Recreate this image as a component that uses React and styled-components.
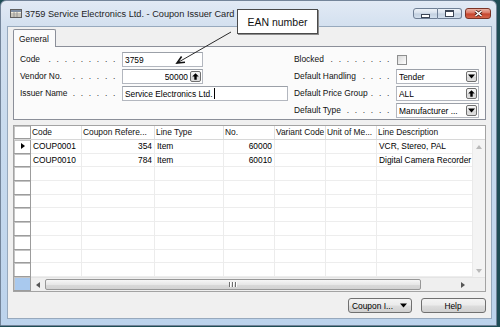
import React from 'react'
import styled, { createGlobalStyle } from 'styled-components'

const GlobalStyle = createGlobalStyle`
  html, body {
    margin: 0;
    padding: 0;
    background: #1f4d56;
  }
  body {
    width: 500px;
    height: 327px;
    overflow: hidden;
    font-family: 'Liberation Sans', Arial, sans-serif;
  }
`;

const Window = styled.div`
  position: relative;
  width: 497px;
  height: 326px;
  box-sizing: border-box;
  border: 1px solid #74859a;
  border-radius: 6px 6px 0 0;
  background: linear-gradient(to bottom, #e2eaf5 0px, #d3e0ef 26px, #c9dbee 120px, #bcd3ec 100%);
  display: flex;
  flex-direction: column;
`;

const TitleBar = styled.div`
  height: 25px;
  flex-shrink: 0;
  display: flex;
  align-items: center;
  padding: 0 5px 0 9px;
  gap: 3px;
`;

const Title = styled.span`
  font-size: 9.2px;
  color: #1e1e1e;
  white-space: nowrap;
`;

const WinButtons = styled.div`
  margin-left: auto;
  display: flex;
  align-items: center;
  gap: 3px;
`;

const WinGroup = styled.div`
  display: flex;
`;

const WinButton = styled.div`
  width: ${p => p.$w}px;
  height: 11px;
  box-sizing: border-box;
  border: 1px solid ${p => (p.$close ? '#7b3326' : '#6f7f95')};
  border-left-width: ${p => (p.$joined ? 0 : 1)}px;
  border-radius: ${p => p.$radius};
  background: ${p => (p.$close
    ? 'linear-gradient(to bottom, #eab1a4 0%, #d9735f 48%, #c6432b 52%, #d5654c 100%)'
    : 'linear-gradient(to bottom, #edf2f8 0%, #d6e0ec 48%, #c2cfdf 52%, #d3e0ee 100%)')};
  display: flex;
  align-items: center;
  justify-content: center;
`;

const MinGlyph = styled.div`
  width: 7px;
  height: 2px;
  margin-top: 4px;
  background: #fff;
  border: 1px solid #3c4656;
`;

const MaxGlyph = styled.div`
  width: 7px;
  height: 4px;
  background: #fff;
  border: 1px solid #3c4656;
  border-top-width: 2px;
`;

const Client = styled.div`
  flex: 1;
  margin: 0 4px 6px 6px;
  border: 1px solid #97a9bd;
  background: #f0f0f0;
  display: flex;
  flex-direction: column;
  padding: 2px 5px 5px 5px;
  min-height: 0;
`;

const TabStrip = styled.div`
  display: flex;
  height: 18px;
  flex-shrink: 0;
`;

const Tab = styled.div`
  width: 43px;
  box-sizing: border-box;
  border: 1px solid #8b8f99;
  border-bottom: none;
  border-radius: 2px 2px 0 0;
  background: #fbfbfb;
  font-size: 8.4px;
  color: #111;
  padding: 4px 0 0 5px;
  position: relative;
  z-index: 1;
`;

const Panel = styled.div`
  height: 74px;
  box-sizing: border-box;
  margin-top: -1px;
  border: 1px solid #8b8f99;
  background: #fbfbfb;
  padding: 5px 6px 1px 6px;
  display: flex;
  flex-shrink: 0;
`;

const FieldColumn = styled.div`
  width: ${p => (p.$w ? `${p.$w}px` : 'auto')};
  flex: ${p => (p.$w ? '0 0 auto' : '1')};
  display: flex;
  flex-direction: column;
  gap: 2px;
`;

const FieldRow = styled.div`
  display: flex;
  align-items: center;
  height: 15px;
`;

const Label = styled.div`
  width: 102px;
  flex-shrink: 0;
  display: flex;
  align-items: baseline;
  white-space: nowrap;
  font-size: 8.4px;
  line-height: 15px;
  color: #111;
`;

const Leader = styled.span`
  margin-left: auto;
  letter-spacing: 1.7px;
  padding-right: 5px;
  color: #333;
`;

const Input = styled.div`
  width: ${p => p.$w}px;
  height: 15px;
  box-sizing: border-box;
  border: 1px solid #b3b7bf;
  border-top-color: #9ba0a8;
  background: #fff;
  display: flex;
  align-items: center;
  justify-content: ${p => (p.$right ? 'flex-end' : 'flex-start')};
  padding: 0 1px 0 2px;
  font-size: 8.4px;
  color: #000;
  white-space: nowrap;
  overflow: hidden;
`;

const InputText = styled.span`
  flex: ${p => (p.$right ? '0 0 auto' : '1')};
  overflow: hidden;
`;

const Caret = styled.span`
  width: 1px;
  height: 11px;
  background: #000;
  margin-left: 1px;
`;

const AssistButton = styled.div`
  width: 11px;
  height: 11px;
  margin-left: 2px;
  box-sizing: border-box;
  flex-shrink: 0;
  border: 1px solid #707070;
  border-radius: 2px;
  background: linear-gradient(to bottom, #f7f7f7 0%, #e6e6e6 50%, #d6d6d6 51%, #e0e0e0 100%);
  display: flex;
  align-items: center;
  justify-content: center;
`;

const CheckBox = styled.div`
  width: 10px;
  height: 10px;
  margin-left: 1px;
  box-sizing: border-box;
  border: 1px solid #8e8f8f;
  background: linear-gradient(135deg, #d8d8d8 0%, #f4f4f4 70%, #fff 100%);
`;

const GridBox = styled.div`
  margin-top: 5px;
  height: 167px;
  box-sizing: border-box;
  border: 1px solid #a3a3a3;
  background: #fff;
  display: flex;
  flex-direction: column;
  flex-shrink: 0;
`;

const HeaderRow = styled.div`
  display: flex;
  height: 14px;
  box-sizing: border-box;
  border-bottom: 1px solid #d8d8d8;
  flex-shrink: 0;
`;

const HeaderCell = styled.div`
  width: ${p => (p.$w ? `${p.$w}px` : 'auto')};
  flex: ${p => (p.$w ? '0 0 auto' : '1')};
  box-sizing: border-box;
  border-right: ${p => (p.$last ? 'none' : '1px solid #e0e0e0')};
  padding-left: 1px;
  font-size: 8.4px;
  line-height: 13px;
  color: #111;
  white-space: nowrap;
  overflow: hidden;
`;

const Selector = styled.div`
  width: 17px;
  flex-shrink: 0;
  box-sizing: border-box;
  border-right: 1px solid #9c9c9c;
  border-bottom: 1px solid #9c9c9c;
  box-shadow: inset 1px 1px 0 #c4c4c4;
  background: ${p => (p.$corner ? '#a9c9ee' : '#fff')};
  display: flex;
  align-items: center;
  justify-content: center;
`;

const RowMarker = styled.span`
  width: 0;
  height: 0;
  margin-left: 2px;
  border-top: 3.5px solid transparent;
  border-bottom: 3.5px solid transparent;
  border-left: 4px solid #000;
`;

const Body = styled.div`
  flex: 1;
  display: flex;
  min-height: 0;
`;

const Rows = styled.div`
  flex: 1;
  display: flex;
  flex-direction: column;
  overflow: hidden;
`;

const Row = styled.div`
  display: flex;
  height: 13.7px;
  flex-shrink: 0;
`;

const Cell = styled.div`
  width: ${p => (p.$w ? `${p.$w}px` : 'auto')};
  flex: ${p => (p.$w ? '0 0 auto' : '1')};
  box-sizing: border-box;
  border-right: ${p => (p.$last ? 'none' : '1px solid #ececec')};
  border-bottom: 1px solid #ededed;
  padding: 0 2px;
  font-size: 8.4px;
  line-height: 13px;
  color: #000;
  text-align: ${p => (p.$right ? 'right' : 'left')};
  white-space: nowrap;
  overflow: hidden;
`;

const VScroll = styled.div`
  width: 13px;
  flex-shrink: 0;
  background: #f4f4f4;
  border-left: 1px solid #eaeaea;
  display: flex;
  flex-direction: column;
  justify-content: space-between;
  align-items: center;
  padding: 5px 0 4px;
  box-sizing: border-box;
`;

const ScrollRow = styled.div`
  display: flex;
  height: 14px;
  flex-shrink: 0;
`;

const HScroll = styled.div`
  flex: 1;
  background: #efefef;
  display: flex;
  align-items: center;
  box-sizing: border-box;
  border-top: 1px solid #e4e4e4;
`;

const ArrowBox = styled.div`
  width: ${p => p.$w}px;
  flex-shrink: 0;
  display: flex;
  justify-content: ${p => (p.$end ? 'flex-end' : 'center')};
  padding-right: ${p => (p.$end ? 6 : 0)}px;
  box-sizing: border-box;
  align-items: center;
`;

const Thumb = styled.div`
  width: 376px;
  height: 11px;
  box-sizing: border-box;
  border: 1px solid #979797;
  border-radius: 2px;
  background: linear-gradient(to bottom, #f6f6f6 0%, #e7e7e7 50%, #d9d9d9 51%, #d2d2d2 100%);
  display: flex;
  align-items: center;
  justify-content: center;
  gap: 1px;
`;

const Grip = styled.span`
  width: 1px;
  height: 5px;
  background: #6e6e6e;
  box-shadow: 1px 0 0 #fff;
  margin-right: 1px;
`;

const CornerBox = styled.div`
  width: 13px;
  flex-shrink: 0;
  background: #efefef;
  border-top: 1px solid #e4e4e4;
`;

const BottomBar = styled.div`
  margin-top: 6px;
  display: flex;
  justify-content: flex-end;
  gap: 9px;
  flex-shrink: 0;
`;

const Button = styled.div`
  width: ${p => p.$w}px;
  height: 15px;
  box-sizing: border-box;
  border: 1px solid #707070;
  border-radius: 3px;
  background: linear-gradient(to bottom, #f3f3f3 0%, #ebebeb 48%, #dddddd 52%, #d0d0d0 100%);
  display: flex;
  align-items: center;
  justify-content: ${p => (p.$split ? 'space-between' : 'center')};
  padding: 0 4px 0 3px;
  font-size: 8.4px;
  color: #000;
`;

const Callout = styled.div`
  position: absolute;
  left: 236px;
  top: 8px;
  width: 81px;
  height: 25px;
  box-sizing: border-box;
  border: 1px solid #4a4a4a;
  background: #fff;
  box-shadow: 1px 1px 0 #8c8c8c;
  display: flex;
  align-items: center;
  justify-content: center;
  font-size: 10.5px;
  color: #111;
  z-index: 5;
`;

const Overlay = styled.svg`
  position: absolute;
  left: -1px;
  top: -1px;
  width: 497px;
  height: 326px;
  pointer-events: none;
  z-index: 4;
`;

const TitleIcon = () => (
  <svg width="12" height="9" viewBox="0 0 12 9">
    <rect x="0.5" y="0.5" width="11" height="8" fill="#f1ecdc" stroke="#5f5f5f" />
    <rect x="1" y="1" width="10" height="2" fill="#7f8ea3" />
    <path d="M1 5h10M1 7h10M4 3v5M7 3v5" stroke="#8a8a8a" strokeWidth="0.8" />
  </svg>
);

const DownGlyph = () => (
  <svg width="7" height="5" viewBox="0 0 7 5">
    <path d="M0 0.5h7L3.5 4.5z" fill="#000" />
  </svg>
);

const UpGlyph = () => (
  <svg width="7" height="7" viewBox="0 0 7 7">
    <path d="M3.5 0.3L6.8 3.6H4.7V6.8H2.3V3.6H0.2z" fill="#000" />
  </svg>
);

const TinyArrow = ({ dir, color }) => {
  const d = {
    up: 'M0 4L3 0L6 4z',
    down: 'M0 0L6 0L3 4z',
    left: 'M4 0L4 6L0 3z',
    right: 'M0 0L4 3L0 6z',
  }[dir];
  const horiz = dir === 'left' || dir === 'right';
  return (
    <svg width={horiz ? 4 : 6} height={horiz ? 6 : 4} viewBox={horiz ? '0 0 4 6' : '0 0 6 4'}>
      <path d={d} fill={color} />
    </svg>
  );
};

const columns = [
  { key: 'code', label: 'Code', w: 51 },
  { key: 'ref', label: 'Coupon Refere...', w: 73, right: true },
  { key: 'type', label: 'Line Type', w: 69 },
  { key: 'no', label: 'No.', w: 51, right: true },
  { key: 'variant', label: 'Variant Code', w: 51 },
  { key: 'uom', label: 'Unit of Me...', w: 51 },
  { key: 'desc', label: 'Line Description' },
];

const lines = [
  { code: 'COUP0001', ref: '354', type: 'Item', no: '60000', variant: '', uom: '', desc: 'VCR, Stereo, PAL' },
  { code: 'COUP0010', ref: '784', type: 'Item', no: '60010', variant: '', uom: '', desc: 'Digital Camera Recorder' },
];

const FieldLabel = ({ text, dots }) => (
  <Label>
    <span>{text}</span>
    <Leader>{Array(dots).fill('.').join(' ')}</Leader>
  </Label>
);

const App = () => {
  const rows = [...lines];
  while (rows.length < 10) rows.push(null);

  return (
    <>
      <GlobalStyle />
      <Window>
        <TitleBar>
          <TitleIcon />
          <Title>3759 Service Electronics Ltd. - Coupon Issuer Card</Title>
          <WinButtons>
            <WinGroup>
              <WinButton $w={25} $radius="3px 0 0 3px"><MinGlyph /></WinButton>
              <WinButton $w={24} $joined $radius="0 3px 3px 0"><MaxGlyph /></WinButton>
            </WinGroup>
            <WinButton $w={26} $close $radius="3px">
              <svg width="9" height="7" viewBox="0 0 9 7">
                <path d="M1.5 1L7.5 6M7.5 1L1.5 6" stroke="#4a1d14" strokeWidth="3" />
                <path d="M1.5 1L7.5 6M7.5 1L1.5 6" stroke="#fff" strokeWidth="1.6" />
              </svg>
            </WinButton>
          </WinButtons>
        </TitleBar>

        <Client>
          <TabStrip>
            <Tab>General</Tab>
          </TabStrip>
          <Panel>
            <FieldColumn $w={274}>
              <FieldRow>
                <FieldLabel text="Code" dots={9} />
                <Input $w={81}><InputText>3759</InputText></Input>
              </FieldRow>
              <FieldRow>
                <FieldLabel text="Vendor No." dots={6} />
                <Input $w={81} $right>
                  <InputText $right>50000</InputText>
                  <AssistButton><UpGlyph /></AssistButton>
                </Input>
              </FieldRow>
              <FieldRow>
                <FieldLabel text="Issuer Name" dots={6} />
                <Input $w={166}>
                  <span>Service Electronics Ltd.</span>
                  <Caret />
                </Input>
              </FieldRow>
            </FieldColumn>
            <FieldColumn>
              <FieldRow>
                <FieldLabel text="Blocked" dots={8} />
                <CheckBox />
              </FieldRow>
              <FieldRow>
                <FieldLabel text="Default Handling" dots={4} />
                <Input $w={83}>
                  <InputText>Tender</InputText>
                  <AssistButton><DownGlyph /></AssistButton>
                </Input>
              </FieldRow>
              <FieldRow>
                <FieldLabel text="Default Price Group" dots={3} />
                <Input $w={83}>
                  <InputText>ALL</InputText>
                  <AssistButton><UpGlyph /></AssistButton>
                </Input>
              </FieldRow>
              <FieldRow>
                <FieldLabel text="Default Type" dots={6} />
                <Input $w={83}>
                  <InputText>Manufacturer ...</InputText>
                  <AssistButton><DownGlyph /></AssistButton>
                </Input>
              </FieldRow>
            </FieldColumn>
          </Panel>

          <GridBox>
            <HeaderRow>
              <Selector />
              {columns.map((c, i) => (
                <HeaderCell key={c.key} $w={c.w} $last={i === columns.length - 1}>
                  {c.label}
                </HeaderCell>
              ))}
            </HeaderRow>
            <Body>
              <Rows>
                {rows.map((r, idx) => (
                  <Row key={idx}>
                    <Selector>{idx === 0 && <RowMarker />}</Selector>
                    {columns.map((c, i) => (
                      <Cell key={c.key} $w={c.w} $right={c.right} $last={i === columns.length - 1}>
                        {r ? r[c.key] : ''}
                      </Cell>
                    ))}
                  </Row>
                ))}
              </Rows>
              <VScroll>
                <TinyArrow dir="up" color="#b9b9b9" />
                <TinyArrow dir="down" color="#b9b9b9" />
              </VScroll>
            </Body>
            <ScrollRow>
              <Selector $corner />
              <HScroll>
                <ArrowBox $w={14}><TinyArrow dir="left" color="#555" /></ArrowBox>
                <Thumb>
                  <Grip /><Grip /><Grip />
                </Thumb>
                <ArrowBox $w={50} $end>
                  <TinyArrow dir="right" color="#555" />
                </ArrowBox>
              </HScroll>
              <CornerBox />
            </ScrollRow>
          </GridBox>

          <BottomBar>
            <Button $w={64} $split>
              <span>Coupon I...</span>
              <DownGlyph />
            </Button>
            <Button $w={65}>Help</Button>
          </BottomBar>
        </Client>

        <Callout>EAN number</Callout>
        <Overlay viewBox="0 0 497 326">
          <path d="M231 32L177 63" stroke="#2a2a2a" strokeWidth="1" fill="none" />
          <path d="M185 62.3L177 63L181.6 56.5" stroke="#111" strokeWidth="1.6" fill="none" />
        </Overlay>
      </Window>
    </>
  );
};

export default App;
